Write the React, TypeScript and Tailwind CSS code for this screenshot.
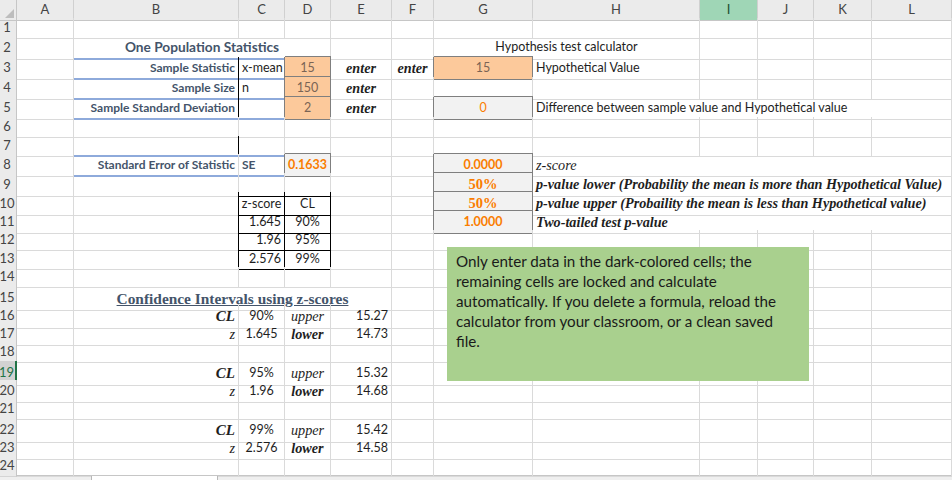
import clsx from 'clsx';
import { ReactNode } from 'react';

const GRID =
  'grid grid-cols-[17px_57px_165px_46px_46px_61px_42px_99px_167px_58px_56px_58px_80px]';
const LETTERS = ['A', 'B', 'C', 'D', 'E', 'F', 'G', 'H', 'I', 'J', 'K', 'L'];

const SPAN: Record<number, string> = {
  1: '',
  2: 'col-span-2',
  3: 'col-span-3',
  4: 'col-span-4',
  5: 'col-span-5',
};

// cell presets, named after the Excel styles they imitate
const HEAD = 'font-bold text-[12px] text-[#44546a] justify-end border-b-2 border-b-[#8eaadb]';
const INPUT =
  'bg-[#fcc99b] text-[#7a6454] justify-center border-r-[#7f7f7f] border-b-[#7f7f7f] shadow-[-1px_0_0_0_#7f7f7f,0_-1px_0_0_#7f7f7f]';
const CALC =
  'bg-[#f2f2f2] text-[#fa7d00] font-bold justify-center border-r-[#7f7f7f] border-b-[#7f7f7f] shadow-[-1px_0_0_0_#7f7f7f,0_-1px_0_0_#7f7f7f]';
const BOX = 'border-r-black border-b-black';
const SERIF = "font-['Liberation_Serif',serif] text-[14.2px]";
const ENTER = clsx(SERIF, 'italic font-bold justify-center');

type Cell = { t?: ReactNode; span?: number; c?: string };
type RowDef = { h: string; cells?: Record<string, Cell>; sel?: boolean };

const ROWS: RowDef[] = [
  { h: 'h-[18px]' },
  {
    h: 'h-[21px]',
    cells: {
      B: {
        t: 'One Population Statistics',
        span: 3,
        c: 'font-bold text-[13.7px] text-[#44546a] justify-center border-b-2 border-b-[#8eaadb]',
      },
      G: { t: 'Hypothesis test calculator', span: 2, c: 'justify-center' },
    },
  },
  {
    h: 'h-[20px]',
    cells: {
      B: { t: 'Sample Statistic', c: clsx(HEAD, 'border-r-black') },
      C: { t: 'x-mean', c: 'border-b-2 border-b-[#8eaadb]' },
      D: { t: '15', c: INPUT },
      E: { t: 'enter', c: ENTER },
      F: { t: 'enter', c: ENTER },
      G: { t: '15', c: INPUT },
      H: { t: 'Hypothetical Value' },
    },
  },
  {
    h: 'h-[20px]',
    cells: {
      B: { t: 'Sample Size', c: clsx(HEAD, 'border-r-black') },
      C: { t: 'n', c: 'border-b-2 border-b-[#8eaadb]' },
      D: { t: '150', c: INPUT },
      E: { t: 'enter', c: ENTER },
    },
  },
  {
    h: 'h-[20px]',
    cells: {
      B: { t: 'Sample Standard Deviation', c: clsx(HEAD, 'border-r-black') },
      C: { t: '', c: 'border-b-2 border-b-[#8eaadb]' },
      D: { t: '2', c: INPUT },
      E: { t: 'enter', c: ENTER },
      G: { t: '0', c: clsx(CALC, 'font-normal') },
      H: { t: 'Difference between sample value and Hypothetical value', span: 5 },
    },
  },
  { h: 'h-[19px]' },
  {
    h: 'h-[18px]',
    cells: {
      B: { t: '', c: 'border-r-black border-b-2 border-b-[#8eaadb]' },
      C: { t: '', c: 'border-b-2 border-b-[#8eaadb]' },
    },
  },
  {
    h: 'h-[19px]',
    cells: {
      B: { t: 'Standard Error of Statistic', c: HEAD },
      C: { t: 'SE', c: 'font-bold text-[12px] text-[#44546a] border-b-2 border-b-[#8eaadb]' },
      D: { t: '0.1633', c: CALC },
      G: { t: '0.0000', c: CALC },
      H: { t: 'z-score', span: 5, c: clsx(SERIF, 'italic') },
    },
  },
  {
    h: 'h-[19px]',
    cells: {
      C: { c: 'border-b-black' },
      D: { c: 'border-b-black' },
      G: { t: '50%', c: clsx(CALC, SERIF, 'text-[14.5px]') },
      H: {
        t: 'p-value lower (Probability the mean is more than Hypothetical Value)',
        span: 5,
        c: clsx(SERIF, 'italic font-bold'),
      },
    },
  },
  {
    h: 'h-[19px]',
    cells: {
      B: { c: 'border-r-black' },
      C: { t: 'z-score', c: clsx(BOX, 'justify-center') },
      D: { t: 'CL', c: clsx(BOX, 'justify-center') },
      G: { t: '50%', c: clsx(CALC, SERIF, 'text-[14.5px]') },
      H: {
        t: 'p-value upper (Probaility the mean is less than Hypothetical value)',
        span: 5,
        c: clsx(SERIF, 'italic font-bold'),
      },
    },
  },
  {
    h: 'h-[19px]',
    cells: {
      B: { c: 'border-r-black' },
      C: { t: '1.645', c: clsx(BOX, 'justify-end') },
      D: { t: '90%', c: clsx(BOX, 'justify-center') },
      G: { t: '1.0000', c: CALC },
      H: { t: 'Two-tailed test p-value', span: 5, c: clsx(SERIF, 'italic font-bold') },
    },
  },
  {
    h: 'h-[19px]',
    cells: {
      B: { c: 'border-r-black' },
      C: { t: '1.96', c: clsx(BOX, 'justify-end') },
      D: { t: '95%', c: clsx(BOX, 'justify-center') },
    },
  },
  {
    h: 'h-[18px]',
    cells: {
      B: { c: 'border-r-black' },
      C: { t: '2.576', c: clsx(BOX, 'justify-end') },
      D: { t: '99%', c: clsx(BOX, 'justify-center') },
    },
  },
  { h: 'h-[19px]' },
  {
    h: 'h-[18px]',
    cells: {
      B: {
        t: 'Confidence Intervals using z-scores',
        span: 4,
        c: "font-['Liberation_Serif',serif] text-[15.4px] font-bold underline text-[#44546a] justify-center",
      },
    },
  },
];

const CI = [
  ['90%', '1.645', '15.27', '14.73'],
  ['95%', '1.96', '15.32', '14.68'],
  ['99%', '2.576', '15.42', '14.58'],
];

CI.forEach(([cl, z, up, lo]) => {
  ROWS.push({
    h: 'h-[19px]',
    cells: {
      B: { t: 'CL', c: clsx(SERIF, 'text-[15px] italic font-bold justify-end') },
      C: { t: cl, c: 'justify-center' },
      D: { t: 'upper', c: clsx(SERIF, 'italic justify-center') },
      E: { t: up, c: 'justify-end' },
    },
  });
  ROWS.push({
    h: 'h-[19px]',
    cells: {
      B: { t: 'z', c: clsx(SERIF, 'italic justify-end') },
      C: { t: z, c: 'justify-center' },
      D: { t: 'lower', c: clsx(SERIF, 'italic font-bold justify-center') },
      E: { t: lo, c: 'justify-end' },
    },
  });
  ROWS.push({ h: 'h-[19px]' });
});
// row 19 is the row of the active cell
ROWS[18].sel = true;

function SheetRow({ n, row }: { n: number; row: RowDef }) {
  const out: ReactNode[] = [];
  for (let i = 0; i < LETTERS.length; ) {
    const key = LETTERS[i];
    const cell = row.cells?.[key];
    const span = cell?.span ?? 1;
    out.push(
      <div
        key={key}
        className={clsx(
          'flex items-center min-w-0 whitespace-nowrap px-[3px] pt-[1px] border-r border-b border-[#dadada]',
          SPAN[span],
          cell?.c,
        )}
      >
        {cell?.t}
      </div>,
    );
    i += span;
  }
  return (
    <div className={clsx(GRID, row.h)}>
      <div
        className={clsx(
          'flex items-center justify-center pr-[2px] text-[13px] border-b border-[#d4d4d4]',
          row.sel
            ? 'bg-[#d2d2d2] text-[#217346] border-r-2 border-r-[#217346]'
            : 'bg-[#ebebeb] text-[#444] border-r border-r-[#c6c6c6]',
        )}
      >
        {n}
      </div>
      {out}
    </div>
  );
}

export default function App() {
  return (
    <div className="relative w-[952px] h-[480px] overflow-hidden bg-white font-['Lato',sans-serif] text-[12.5px] text-[#1e1e1e]">
      {/* column headers */}
      <div className={clsx(GRID, 'h-[18px]')}>
        <div className="relative bg-[#ebebeb] border-r border-b border-[#c6c6c6]">
          <svg className="absolute right-[2px] bottom-[2px]" width="9" height="9" viewBox="0 0 9 9">
            <polygon points="9,0 9,9 0,9" fill="#bdbdbd" />
          </svg>
        </div>
        {LETTERS.map((l) => (
          <div
            key={l}
            className={clsx(
              'flex items-center justify-center text-[13px] border-r border-b border-r-[#d0d0d0] border-b-[#c6c6c6]',
              l === 'I' ? 'bg-[#9fd6b6] text-[#1b4d2e]' : 'bg-[#ebebeb] text-[#444]',
            )}
          >
            {l}
          </div>
        ))}
      </div>

      {ROWS.map((row, i) => (
        <SheetRow key={i} n={i + 1} row={row} />
      ))}

      {/* sheet tab strip */}
      <div className="flex h-[6px] bg-[#efefef] border-t border-[#c6c6c6]">
        <div className="w-[92px] border-r border-[#b8b8b8]" />
        <div className="w-[126px] bg-white border-r border-[#b8b8b8]" />
      </div>

      {/* text box shape floating over the sheet */}
      <div className="absolute left-[447px] top-[247px] w-[362px] h-[134px] bg-[#a9d08e] px-[9px] pt-[4px] text-[15.2px] leading-[20px] text-[#1a1a1a]">
        Only enter data in the dark-colored cells; the
        <br />
        remaining cells are locked and calculate
        <br />
        automatically. If you delete a formula, reload the
        <br />
        calculator from your classroom, or a clean saved
        <br />
        file.
      </div>
    </div>
  );
}
